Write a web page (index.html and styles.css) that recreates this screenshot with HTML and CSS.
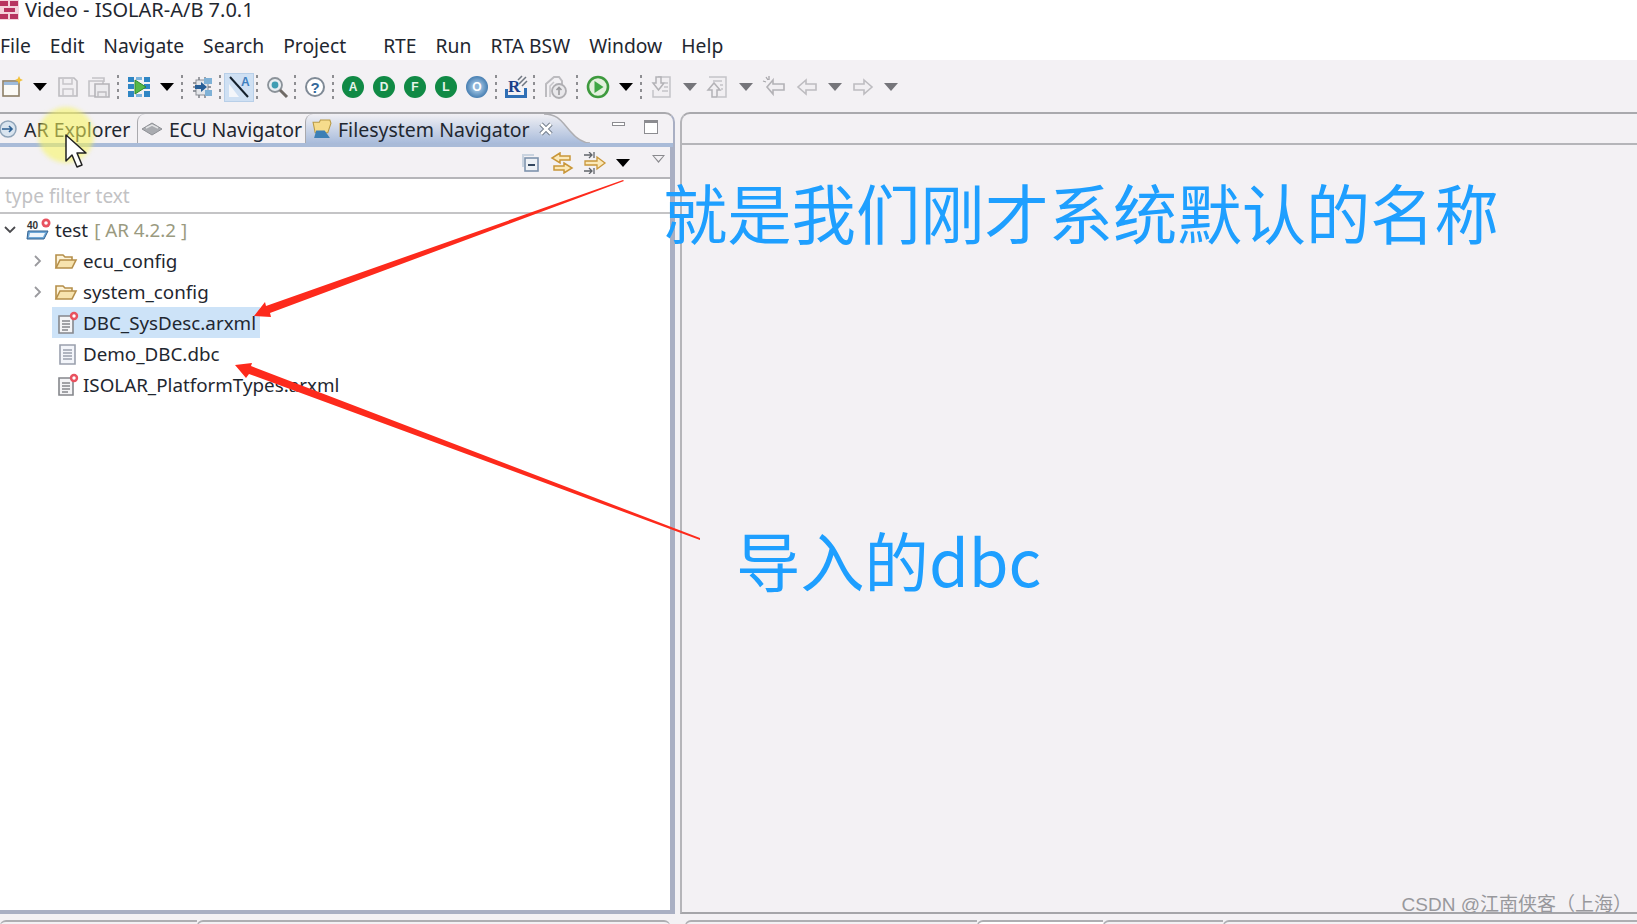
FILE: index.html
```html
<!DOCTYPE html>
<html lang="zh-CN">
<head>
    <meta charset="UTF-8">
    <title>Video - ISOLAR-A/B 7.0.1</title>
    <link rel="stylesheet" href="styles.css">
</head>
<body>
    <svg class="defs" width="0" height="0">
        <symbol id="floppy" viewBox="0 0 24 24">
            <path d="M3 3h15l3 3v15H3z" fill="#f1eff2" stroke="#bdbcc0" stroke-width="1.6"/>
            <path d="M7 4v5h9V4M7 21v-7h10v7" fill="none" stroke="#c6c5c9" stroke-width="1.5"/>
        </symbol>
        <symbol id="arxml" viewBox="0 0 24 24">
            <path d="M3 5h14v17H3z" fill="#f4f4f6" stroke="#85878c" stroke-width="1.6"/>
            <path d="M6 10h8M6 13h8M6 16h8M6 19h6" stroke="#85878c" stroke-width="1.4"/>
            <circle cx="18" cy="5" r="4.2" fill="#e8525f"/>
            <circle cx="18" cy="5" r="1.7" fill="#fff"/>
        </symbol>
        <symbol id="folder" viewBox="0 0 24 24">
            <path d="M2 19V6h7l2 2h7v3" fill="#fdf3d8" stroke="#b58f4a" stroke-width="1.6"/>
            <path d="M2 19l4-8h16l-4 8z" fill="#f7e3ae" stroke="#b58f4a" stroke-width="1.6"/>
        </symbol>
    </svg>

    <div class="titlebar">
        <svg class="app-icon" width="19" height="20" viewBox="0 0 19 20">
            <rect width="19" height="20" fill="#f4d3dc"/>
            <path d="M0 1h8v5H0zM10 1h8v5h-8zM4 8h11v4H4zM0 14h8v5H0zM10 14h8v5h-8z" fill="#b8335f"/>
        </svg>
        <span>Video - ISOLAR-A/B 7.0.1</span>
    </div>

    <nav class="menubar">
        <span>File</span>
        <span>Edit</span>
        <span>Navigate</span>
        <span>Search</span>
        <span>Project</span>
        <span class="menu-gap">RTE</span>
        <span>Run</span>
        <span>RTA BSW</span>
        <span>Window</span>
        <span>Help</span>
    </nav>

    <div class="toolbar">
        <div class="tb-group tb-first">
            <svg class="icon" viewBox="0 0 24 24">
                <rect x="3" y="6" width="16" height="15" fill="#fbfaf6" stroke="#8d7f66" stroke-width="1.6"/>
                <rect x="4" y="7" width="14" height="3" fill="#9dbbdc"/>
                <path d="M19 1l1.3 2.7L23 5l-2.7 1.3L19 9l-1.3-2.7L15 5l2.7-1.3z" fill="#f2c23c"/>
            </svg>
            <i class="drop"></i>
            <svg class="icon"><use href="#floppy"/></svg>
            <svg class="icon icon-near" viewBox="0 0 24 24">
                <path d="M5 3h12v4M2 6h14v15H2z" fill="#f1eff2" stroke="#c3c2c6" stroke-width="1.6"/>
                <path d="M8 9h14v13H8z" fill="#ecebee" stroke="#b5b4b8" stroke-width="1.6"/>
                <path d="M11 22v-5h8v5" fill="none" stroke="#bdbcc0" stroke-width="1.4"/>
            </svg>
        </div>
        <i class="sep"></i>
        <div class="tb-group tb-wide">
            <svg class="icon" viewBox="0 0 24 24">
                <path d="M1 2h6v5H1zM1 9h6v5H1zM1 16h6v6H1zM17 2h6v5h-6zM17 9h6v5h-6zM17 16h6v6h-6z" fill="#2f86c4"/>
                <path d="M9 2h6v3H9zM9 19h6v3H9z" fill="#7bb4dc"/>
                <path d="M8 5l11 7-11 7z" fill="#58b947" stroke="#2f8a2c"/>
            </svg>
            <i class="drop"></i>
        </div>
        <i class="sep"></i>
        <div class="tb-group tb-tight">
            <svg class="icon" viewBox="0 0 24 24">
                <rect x="6" y="5" width="12" height="15" fill="#e4e6ea" stroke="#8b8f96"/>
                <path d="M3 8h3M3 12h3M3 16h3M18 8h3M18 12h3M18 16h3M9 2v3M15 2v3M9 20v3M15 20v3" stroke="#777b82" stroke-width="1.4"/>
                <path d="M14 3h8v6h-8zM15 15h7v6h-7z" fill="#7fb1d6"/>
                <path d="M5 10h6V7l6 5-6 5v-3H5z" fill="#285f97"/>
            </svg>
        </div>
        <i class="sep"></i>
        <div class="tb-group tb-toggle">
            <button class="toggle" type="button">
                <svg width="24" height="24" viewBox="0 0 24 24">
                    <path d="M2 9l10 13H2z" fill="#f4f6fa"/>
                    <path d="M3 2l18 20" stroke="#14202c" stroke-width="2"/>
                    <text x="14" y="11" class="toggle-a">A</text>
                </svg>
            </button>
        </div>
        <i class="sep"></i>
        <div class="tb-group tb-tight">
            <svg class="icon" viewBox="0 0 24 24">
                <circle cx="10" cy="10" r="7" fill="#e8eef2" stroke="#8b9299" stroke-width="1.8"/>
                <circle cx="10" cy="10" r="3.4" fill="#3f9db3"/>
                <path d="M15 15l7 7" stroke="#6f6a66" stroke-width="3"/>
            </svg>
        </div>
        <i class="sep"></i>
        <div class="tb-group tb-tight">
            <span class="help">?</span>
        </div>
        <i class="sep"></i>
        <div class="tb-group tb-circles">
            <span class="badge">A</span>
            <span class="badge">D</span>
            <span class="badge">F</span>
            <span class="badge">L</span>
            <span class="badge badge-blue">O</span>
        </div>
        <i class="sep"></i>
        <div class="tb-group tb-tight">
            <svg class="icon" viewBox="0 0 24 24">
                <path d="M1 14v9h22V13h-3v7H4v-6z" fill="#2f6fb5"/>
                <text x="4" y="17" class="r-mark">R</text>
                <path d="M15 9l7-7M18 11l5-5M14 5l4-4" stroke="#6f7680" stroke-width="1.5"/>
            </svg>
        </div>
        <i class="sep"></i>
        <div class="tb-group tb-house">
            <svg class="icon" viewBox="0 0 24 24">
                <path d="M2 22V9l8-7h5l3 4v3" fill="none" stroke="#bcbbbf" stroke-width="2"/>
                <path d="M6 22V11l4-4" fill="none" stroke="#c8c7cb" stroke-width="1.6"/>
                <circle cx="15" cy="16" r="7" fill="#e9e8eb" stroke="#aeadb1" stroke-width="1.8"/>
                <path d="M15 20v-7m-2.500 2l2.500-2.500 2.500 2.500" fill="none" stroke="#9a999d" stroke-width="1.6"/>
            </svg>
        </div>
        <i class="sep"></i>
        <div class="tb-group tb-wide">
            <svg class="icon" viewBox="0 0 24 24">
                <circle cx="12" cy="12" r="10" fill="#e3f0dd" stroke="#3e9a3e" stroke-width="2.600"/>
                <path d="M8.500 6l9 6-9 6z" fill="#3fa745"/>
            </svg>
            <i class="drop"></i>
        </div>
        <i class="sep"></i>
        <div class="tb-group tb-wide">
            <svg class="icon" viewBox="0 0 24 24">
                <path d="M8 2h12v20H3v-7" fill="#f1eff2" stroke="#c4c3c7" stroke-width="1.500"/>
                <path d="M6 2h5v6h3l-5.500 7L3 8h3z" fill="#f1eff2" stroke="#b3b2b6" stroke-width="1.500"/>
                <path d="M14 8h4M14 12h4M12 16h6" stroke="#c4c3c7" stroke-width="1.400"/>
            </svg>
            <i class="drop drop-dim"></i>
            <svg class="icon" viewBox="0 0 24 24">
                <path d="M3 2h17v20h-8" fill="#f1eff2" stroke="#c4c3c7" stroke-width="1.500"/>
                <path d="M6 22v-7H2l6-7 6 7h-3v7z" fill="#f1eff2" stroke="#b3b2b6" stroke-width="1.500"/>
                <path d="M7 6h9M14 10h3M15 14h2" stroke="#c4c3c7" stroke-width="1.400"/>
            </svg>
            <i class="drop drop-dim"></i>
            <svg class="icon" viewBox="0 0 24 24">
                <path d="M11 5l-6 7 6 7v-4h11V9H11z" fill="#f1eff2" stroke="#b3b2b6" stroke-width="1.600"/>
                <path d="M4 2l2 3M1 6l3 1M7 1v4" stroke="#a7a6aa" stroke-width="1.300"/>
            </svg>
            <svg class="icon" viewBox="0 0 24 24">
                <path d="M11 5l-8 7 8 7v-4h10V9H11z" fill="#f1eff2" stroke="#bdbcc0" stroke-width="1.600"/>
            </svg>
            <i class="drop drop-dim"></i>
            <svg class="icon" viewBox="0 0 24 24">
                <path d="M13 5l8 7-8 7v-4H3V9h10z" fill="#f1eff2" stroke="#bdbcc0" stroke-width="1.600"/>
            </svg>
            <i class="drop drop-dim"></i>
        </div>
    </div>

    <main class="workbench">
        <section class="pane-left">
            <div class="tabstrip">
                <div class="tab tab-first">
                    <svg class="tab-icon" width="18" height="18" viewBox="0 0 18 18">
                        <circle cx="8" cy="9" r="8" fill="#d9e4ef" stroke="#8ea3b8" stroke-width="1.500"/>
                        <path d="M2 9h10m-3-3l3 3-3 3" fill="none" stroke="#2c5f92" stroke-width="1.600"/>
                    </svg>
                    <span>AR Explorer</span>
                </div>
                <div class="tab tab-ecu">
                    <svg class="tab-icon" width="22" height="16" viewBox="0 0 22 16">
                        <path d="M1 8l10-6 10 6-10 6z" fill="#a9abb0" stroke="#8f9196"/>
                        <path d="M5 7l6-3 6 3" fill="none" stroke="#e2e3e5" stroke-width="1.400"/>
                    </svg>
                    <span>ECU Navigator</span>
                </div>
                <div class="tab tab-active">
                    <svg class="tab-icon" width="20" height="20" viewBox="0 0 19 19">
                        <path d="M1 3h6l1-2h9l1 3-3 9H3z" fill="#f6dc8c" stroke="#b99a45"/>
                        <path d="M2 18l2-7h8l5 7z" fill="#3c7fb5"/>
                    </svg>
                    <span>Filesystem Navigator</span>
                    <svg class="tab-close" width="16" height="16" viewBox="0 0 16 16">
                        <path d="M3 3l10 10M13 3L3 13" stroke="#66717f" stroke-width="4.500"/>
                        <path d="M3 3l10 10M13 3L3 13" stroke="#fff" stroke-width="2.500"/>
                    </svg>
                </div>
                <svg class="tab-curve" width="46" height="29" viewBox="0 0 46 29" preserveAspectRatio="none">
                    <defs>
                        <linearGradient id="tabfade" x1="0" y1="0" x2="0" y2="1">
                            <stop offset="0" stop-color="#f1f0f4"/>
                            <stop offset="1" stop-color="#a9bcdb"/>
                        </linearGradient>
                    </defs>
                    <path d="M0 0c14 0 18 8 26 17 6 7 12 12 20 12H0z" fill="url(#tabfade)"/>
                    <path d="M0 0c14 0 18 8 26 17 6 7 12 12 20 12" fill="none" stroke="#aeaeb2" stroke-width="1.500"/>
                </svg>
                <div class="pane-btns">
                    <i class="btn-min"></i>
                    <i class="btn-max"></i>
                </div>
            </div>
            <div class="view">
                <div class="view-toolbar">
                    <svg width="20" height="20" viewBox="0 0 20 20">
                        <path d="M2 1h12v2H4v11H2z" fill="#c9d3df"/>
                        <rect x="5" y="5" width="13" height="13" fill="#eef1f5" stroke="#7d93ad" stroke-width="1.600"/>
                        <path d="M8 12h7" stroke="#33475e" stroke-width="2"/>
                    </svg>
                    <svg class="vt-link" width="24" height="22" viewBox="0 0 24 22">
                        <path d="M10 1L2 6l8 5V8h10V4H10z" fill="#fbe9ba" stroke="#c9973a" stroke-width="1.500"/>
                        <path d="M14 11l8 5-8 5v-3H4v-4h10z" fill="#fbe9ba" stroke="#c9973a" stroke-width="1.500"/>
                    </svg>
                    <svg class="vt-filter" width="24" height="22" viewBox="0 0 24 22">
                        <path d="M1 3h8M6 0l3 3-3 3M11 0v6M1 19h8M6 16l3 3-3 3M11 16v6" fill="none" stroke="#60646a" stroke-width="1.300"/>
                        <path d="M2 9h12V5l8 6-8 6v-4H2z" fill="#fbe9ba" stroke="#c9973a" stroke-width="1.300"/>
                    </svg>
                    <i class="drop vt-drop"></i>
                    <i class="view-menu"></i>
                </div>
                <input class="filter" type="text" placeholder="type filter text">
                <ul class="tree">
                    <li class="row row-root">
                        <svg class="chev" width="12" height="8" viewBox="0 0 12 8"><path d="M1 1l5 5 5-5" fill="none" stroke="#4a4a4e" stroke-width="1.800"/></svg>
                        <svg class="root-icon" width="26" height="24" viewBox="0 0 26 24">
                            <path d="M2 13h20l-4 8H1z" fill="#6da6d6" stroke="#31608f"/>
                            <path d="M4 15h15l-2 4H3z" fill="#eef5fb"/>
                            <text x="1" y="11" class="root-num">40</text>
                            <circle cx="20" cy="5" r="4.500" fill="#e8525f"/>
                            <circle cx="20" cy="5" r="1.800" fill="#fff"/>
                        </svg>
                        <span>test</span>
                        <span class="muted">[ AR 4.2.2 ]</span>
                    </li>
                    <li class="row row-folder">
                        <svg class="chev" width="8" height="12" viewBox="0 0 8 12"><path d="M1 1l5 5-5 5" fill="none" stroke="#9a9a9e" stroke-width="1.800"/></svg>
                        <svg class="item-icon" width="24" height="24"><use href="#folder"/></svg>
                        <span>ecu_config</span>
                    </li>
                    <li class="row row-folder">
                        <svg class="chev" width="8" height="12" viewBox="0 0 8 12"><path d="M1 1l5 5-5 5" fill="none" stroke="#9a9a9e" stroke-width="1.800"/></svg>
                        <svg class="item-icon" width="24" height="24"><use href="#folder"/></svg>
                        <span>system_config</span>
                    </li>
                    <li class="row row-file row-selected">
                        <svg class="item-icon" width="24" height="24"><use href="#arxml"/></svg>
                        <span>DBC_SysDesc.arxml</span>
                    </li>
                    <li class="row row-file">
                        <svg class="item-icon" width="24" height="24" viewBox="0 0 24 24">
                            <path d="M4 3h15v19H4z" fill="#f3f5fa" stroke="#9aa0ad" stroke-width="1.600"/>
                            <path d="M7 8h9M7 11h9M7 14h9M7 17h9" stroke="#9aa0ad" stroke-width="1.400"/>
                        </svg>
                        <span>Demo_DBC.dbc</span>
                    </li>
                    <li class="row row-file">
                        <svg class="item-icon" width="24" height="24"><use href="#arxml"/></svg>
                        <span>ISOLAR_PlatformTypes.arxml</span>
                    </li>
                </ul>
            </div>
        </section>
        <section class="pane-right">
            <div class="editor-tabs"></div>
            <div class="editor-area"></div>
        </section>
    </main>

    <div class="bottom-tabs">
        <div class="bt bt-a"></div>
        <div class="bt bt-b"></div>
        <div class="bt bt-c"></div>
        <div class="bt bt-d"></div>
        <div class="bt bt-e bt-white"></div>
        <div class="bt bt-f"></div>
        <div class="bt bt-g"></div>
    </div>

    <div class="halo"></div>
    <svg class="cursor" width="26" height="36" viewBox="0 0 26 36">
        <path d="M2 2v26l6-6 5 12 5-2-5-12h9z" fill="#fff" stroke="#222" stroke-width="1.500" stroke-linejoin="round"/>
    </svg>

    <svg class="arrows" width="1637" height="924" viewBox="0 0 1637 924">
        <polygon points="623,180 624,181 270,313 271,317 254,316 265,302 266,306" fill="#fd2a1c"/>
        <polygon points="700,538 700,540 249,374 246,378 235,365 252,363 251,366" fill="#fd2a1c"/>
    </svg>

    <div class="note note-top">就是我们刚才系统默认的名称</div>
    <div class="note note-bottom">导入的dbc</div>
    <div class="watermark">CSDN @江南侠客（上海）</div>
</body>
</html>
```

FILE: styles.css
```css
html, body {
    margin: 0;
    padding: 0;
}
body {
    position: relative;
    width: 1637px;
    height: 924px;
    overflow: hidden;
    background-color: #f3f1f4;
    color: #1f2730;
    font-family: "Noto Sans", "Noto Sans CJK SC", sans-serif;
    font-size: 19.5px;
}
.defs {
    position: absolute;
}

/* title and menu */
.titlebar {
    display: flex;
    align-items: center;
    gap: 6px;
    height: 20px;
    padding-bottom: 10px;
    background-color: #fff;
    font-size: 20px;
    line-height: 20px;
}
.menubar {
    display: flex;
    align-items: center;
    gap: 19px;
    height: 30px;
    background-color: #fff;
    font-size: 19.3px;
}
.menu-gap {
    margin-left: 18px;
}

/* main toolbar */
.toolbar {
    display: flex;
    align-items: center;
    height: 52px;
    padding-top: 2px;
    box-sizing: border-box;
}
.tb-group {
    display: flex;
    align-items: center;
    gap: 9px;
    padding: 0 6px 0 7px;
}
.tb-first {
    padding-left: 0;
}
.tb-wide {
    padding: 0 7px 0 8px;
}
.tb-tight {
    padding: 0 5px 0 7px;
}
.tb-toggle {
    padding: 0 2px 0 3px;
}
.tb-circles {
    gap: 7px;
}
.tb-house {
    padding: 0 8px 0 9px;
}
.icon {
    width: 24px;
    height: 24px;
    flex: none;
}
.icon-near {
    margin-left: -2px;
}
.sep {
    width: 2px;
    height: 24px;
    flex: none;
    background-image: linear-gradient(#8e8e92 50%, transparent 50%);
    background-size: 2px 7px;
}
.drop {
    width: 0;
    height: 0;
    flex: none;
    border-left: 7px solid transparent;
    border-right: 7px solid transparent;
    border-top: 8px solid #000;
}
.drop-dim {
    border-top-color: #75757a;
}
.toggle {
    display: flex;
    align-items: center;
    justify-content: center;
    width: 30px;
    height: 29px;
    padding: 0;
    border: 1px solid #b8cfe8;
    background-color: #cfe0f3;
}
.toggle-a {
    font: bold 12px "Liberation Sans", sans-serif;
    fill: #3f7fbf;
}
.help {
    display: flex;
    align-items: center;
    justify-content: center;
    width: 20px;
    height: 20px;
    margin: 0 2px;
    border: 2px solid #7f8a96;
    border-radius: 50%;
    box-sizing: border-box;
    background-color: #fff;
    color: #35689a;
    font: bold 15px "Liberation Sans", sans-serif;
}
.badge {
    display: flex;
    align-items: center;
    justify-content: center;
    width: 22px;
    height: 22px;
    margin: 0 1px;
    border-radius: 50%;
    background-color: #108a45;
    color: #e6f4ea;
    font: bold 12px "Liberation Sans", sans-serif;
}
.badge-blue {
    background: radial-gradient(circle, #8fb7da 30%, #3f78ad 75%);
    color: #fff;
}
.r-mark {
    font: bold 17px "Liberation Serif", serif;
    fill: #1c3f8a;
}

/* panes */
.workbench {
    display: flex;
    gap: 5px;
    height: 802px;
}
.pane-left {
    display: flex;
    flex-direction: column;
    width: 675px;
    box-sizing: border-box;
    border-top: 2px solid #a9a9ad;
    border-right: 2px solid #a9afc3;
    border-top-right-radius: 10px;
}
.tabstrip {
    position: relative;
    display: flex;
    align-items: stretch;
    height: 29px;
    flex: none;
    border-bottom: 4px solid #a9bbd8;
}
.tab {
    display: flex;
    align-items: center;
    flex: none;
    box-sizing: border-box;
    height: 29px;
    padding-top: 1px;
    white-space: nowrap;
}
.tab-icon {
    flex: none;
}
.tab-first {
    width: 137px;
    gap: 6px;
}
.tab-ecu {
    width: 168px;
    padding-left: 3px;
    gap: 6px;
    border-left: 1px solid #a9a9ad;
    border-top-left-radius: 8px;
}
.tab-active {
    width: 239px;
    padding-left: 6px;
    gap: 6px;
    border-left: 1px solid #a9a9ad;
    border-top-left-radius: 8px;
    background-image: linear-gradient(#f1f0f4, #a9bcdb);
}
.tab-close {
    position: relative;
    z-index: 1;
    flex: none;
    margin-left: 2px;
}
.tab-curve {
    flex: none;
    display: block;
}
.pane-btns {
    display: flex;
    gap: 19px;
    margin-left: 22px;
    padding-top: 6px;
}
.btn-min {
    width: 13px;
    height: 4px;
    border: 1px solid #8c8c90;
    box-sizing: border-box;
    background-color: #fff;
    margin-top: 2px;
}
.btn-max {
    width: 14px;
    height: 14px;
    box-sizing: border-box;
    border: 1px solid #8c8c90;
    border-top-width: 3px;
    background-color: #fff;
}
.view {
    display: flex;
    flex-direction: column;
    flex: 1;
    min-height: 0;
    border-right: 3px solid #a9afc3;
    border-bottom: 4px solid #a9afc3;
}
.view-toolbar {
    display: flex;
    align-items: center;
    justify-content: flex-end;
    height: 28px;
    flex: none;
    padding: 2px 5px 0 0;
    border-bottom: 2px solid #b5b5b9;
}
.vt-link {
    margin-left: 10px;
}
.vt-filter {
    margin-left: 9px;
}
.vt-drop {
    margin-left: 9px;
}
.view-menu {
    width: 13px;
    height: 8px;
    margin: -8px 0 0 22px;
    background-color: #8a8a8e;
    clip-path: polygon(0 0, 100% 0, 50% 100%, 0 0, 15% 12%, 50% 75%, 85% 12%, 15% 12%);
}
.filter {
    display: block;
    height: 35px;
    flex: none;
    box-sizing: border-box;
    width: 100%;
    margin: 0;
    padding: 0 5px;
    border: 0;
    border-bottom: 2px solid #c4c4c6;
    outline: 0;
    font: inherit;
    font-size: 19px;
    background-color: #fff;
}
.filter::placeholder {
    color: #c2c2c4;
    opacity: 1;
}
.tree {
    flex: 1;
    margin: 0;
    padding: 0;
    list-style: none;
    background-color: #fff;
    font-size: 18.8px;
}
.row {
    display: flex;
    align-items: center;
    height: 31px;
    box-sizing: border-box;
    width: fit-content;
    white-space: nowrap;
}
.row-root {
    padding-left: 4px;
}
.root-icon {
    margin: 0 3px 0 10px;
}
.root-num {
    font: bold 10px "Liberation Sans", sans-serif;
    fill: #333;
}
.muted {
    margin-left: 6px;
    color: #9a9a80;
}
.row-folder {
    padding-left: 34px;
}
.row-folder .item-icon {
    margin: 0 5px 0 12px;
}
.row-file {
    margin-left: 52px;
    padding: 0 4px;
}
.item-icon {
    flex: none;
    margin-right: 3px;
}
.row-selected {
    background-color: #cde3f8;
}
.pane-right {
    display: flex;
    flex-direction: column;
    flex: 1;
    box-sizing: border-box;
    border-top: 2px solid #a9a9ad;
    border-left: 2px solid #b5b5b9;
    border-bottom: 2px solid #a5a5a9;
    border-top-left-radius: 10px;
}
.editor-tabs {
    height: 29px;
    flex: none;
    border-bottom: 2px solid #b5b5b9;
}
.editor-area {
    flex: 1;
}

/* row of minimised stacks at the bottom */
.bottom-tabs {
    display: flex;
    height: 4px;
    margin-top: 6px;
}
.bt {
    box-sizing: border-box;
    height: 6px;
    border-top: 2px solid #aeaeb2;
    border-top-left-radius: 6px;
    border-left: 1px solid #aeaeb2;
}
.bt-a { width: 197px; border-left: 0; }
.bt-b { width: 473px; border-top-right-radius: 6px; }
.bt-c { width: 15px; border: 0; }
.bt-d { width: 292px; }
.bt-e { width: 126px; }
.bt-white { background-color: #fff; }
.bt-f { width: 120px; }
.bt-g { width: 414px; }

/* recording overlay and annotations */
.halo {
    position: absolute;
    left: 38px;
    top: 107px;
    width: 56px;
    height: 56px;
    border-radius: 50%;
    background-color: rgba(248, 246, 90, 0.55);
    filter: blur(2px);
}
.cursor {
    position: absolute;
    left: 64px;
    top: 133px;
}
.arrows {
    position: absolute;
    left: 0;
    top: 0;
}
.note {
    position: absolute;
    color: #1e9fff;
    font-family: "Noto Sans CJK SC", sans-serif;
    font-size: 64.3px;
    line-height: 76px;
    white-space: nowrap;
}
.note-top {
    left: 663px;
    top: 173px;
}
.note-bottom {
    left: 736px;
    top: 521px;
}
.watermark {
    position: absolute;
    right: 5px;
    top: 893px;
    color: #98989c;
    font-family: "Liberation Sans", "Noto Sans CJK SC", sans-serif;
    font-size: 19px;
    line-height: 24px;
    white-space: nowrap;
    text-spacing-trim: space-all;
}
```
